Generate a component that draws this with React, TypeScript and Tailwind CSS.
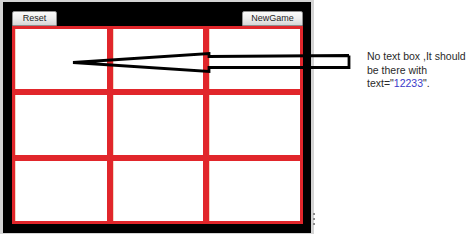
import React from 'react';

const cells = Array.from({ length: 9 }, (_, i) => i);

const GameButton: React.FC<{ label: string; width: string }> = ({ label, width }) => (
    <button
        className={`${width} h-[15px] flex items-center justify-center rounded-t-[2px] border border-[#8f8f8f] bg-gradient-to-b from-[#fbfbfb] via-[#eeeeee] to-[#d6d6d6] text-[9px] leading-none text-[#1e1e1e]`}
    >
        {label}
    </button>
);

export default function App() {
    return (
        <div className="relative w-[474px] h-[237px] bg-white overflow-hidden font-['Liberation_Sans',Arial,sans-serif]">
            <div className="flex">
                {/* window */}
                <div className="w-[314px] h-[234px] border-l-[3px] border-t-2 border-r-[3px] border-b border-[#d4d4d4] flex flex-col">
                    <div className="w-[308px] h-[231px] bg-black pl-[9px] pr-[8px] pt-[9px] flex flex-col">
                        <div className="flex justify-between h-[15px]">
                            <GameButton label="Reset" width="w-[45px]" />
                            <GameButton label="NewGame" width="w-[61px]" />
                        </div>
                        <div className="grid grid-cols-[98px_96px_97px] grid-rows-[66px_66px_66px] w-[291px]">
                            {cells.map((i) => (
                                <div
                                    key={i}
                                    className="bg-white border-[3px] border-[#e1262b] shadow-[inset_1px_0_0_#f2d7c4]"
                                />
                            ))}
                        </div>
                    </div>
                </div>
                <div className="ml-[53px] pt-[50px] text-[10.5px] leading-[13.5px] text-[#2a2a2a]">
                    No text box ,It should
                    <br />
                    be there with
                    <br />
                    text="<span className="text-[#3a3ac8]">12233</span>".
                </div>
            </div>

            {/* resize grip dots */}
            <div className="absolute left-[313px] top-[213px] flex flex-col gap-[3px]">
                <div className="w-[2px] h-[2px] bg-[#8a8a8a]" />
                <div className="w-[2px] h-[2px] bg-[#8a8a8a]" />
                <div className="w-[2px] h-[2px] bg-[#8a8a8a]" />
            </div>

            {/* hand-drawn arrow annotation */}
            <svg className="absolute left-0 top-0 pointer-events-none" width="474" height="237" viewBox="0 0 474 237">
                <polyline
                    points="349,55.5 209,56.5 209,53.5 73,62.5 209,71.5 209,67.5 349,67.5 349,55.5"
                    fill="none"
                    stroke="#000"
                    strokeWidth="2.8"
                    strokeLinejoin="miter"
                />
            </svg>
        </div>
    );
}
